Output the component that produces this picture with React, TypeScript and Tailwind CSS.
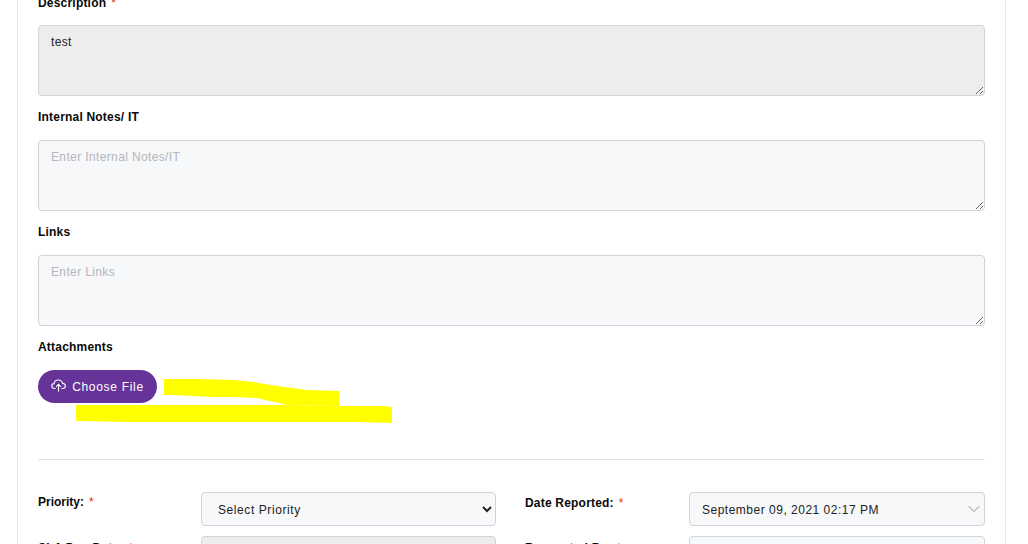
import { ChevronDown } from "lucide-react"

const fieldLabel = "block text-[12px] font-bold leading-[18px] tracking-[0.2px] text-[#0a0a0a]"
const noteBox =
  "block w-full h-[71px] rounded-[4px] border border-[#ced4da] bg-[#f7f8fa] px-3 py-2 text-[12px] leading-[16px] tracking-[0.37px] text-[#222] placeholder:text-[#b4b6ba] outline-none"

const Req = () => <span className="ml-[5px] font-normal text-[#f1292b]">*</span>

const UploadCloud = () => (
  <svg width="15" height="13" viewBox="0 0 15 13" fill="none" stroke="currentColor" strokeWidth="1.1" className="-mt-[3px]">
    <path d="M4.5 9.5H3.5C1.8 9.5 .8 8.4 .8 7C.8 5.7 1.8 4.7 3 4.6C3.4 2.5 5.1 1 7.3 1C9.4 1 11.1 2.4 11.6 4.4C13.2 4.5 14.3 5.6 14.3 7C14.3 8.4 13.2 9.5 11.6 9.5H10.5" />
    <path d="M7.5 12.5V5.5M5 7.8L7.5 5.3L10 7.8" />
  </svg>
)

const Scribble = () => (
  <svg className="absolute left-0 top-0" width="1028" height="544" fill="#ffff00">
    <polygon points="164,379 197,379 233,380 253,382 277,386 307,390 339,391 339,406 287,405 257,398 233,397 212,397 172,395 164,395" />
    <polygon points="76,405 283,405 339,406 383,406 392,407 392,423 357,422 130,422 76,421" />
  </svg>
)

export default function App() {
  return (
    <div
      className="relative h-[544px] overflow-hidden bg-white"
      style={{ fontFamily: '"Liberation Sans", Arial, sans-serif' }}
    >
      <div className="ml-[17px] w-[989px] border-x border-[#e6e6e6] px-5 -mt-[6px]">
        <label className={fieldLabel}>
          Description
          <Req />
        </label>
        <textarea readOnly value="test" className={`${noteBox} mt-[13px] bg-[#ededed]!`} />

        <label className={`${fieldLabel} mt-[12px]`}>Internal Notes/ IT</label>
        <textarea placeholder="Enter Internal Notes/IT" className={`${noteBox} mt-[14px]`} />

        <label className={`${fieldLabel} mt-[12px]`}>Links</label>
        <textarea placeholder="Enter Links" className={`${noteBox} mt-[14px]`} />

        <label className={`${fieldLabel} mt-[12px]`}>Attachments</label>
        <div className="mt-[14px] flex">
          <button className="flex h-[33px] w-[119px] items-center justify-center gap-[6px] rounded-full bg-[#663399] text-[12px] tracking-[0.7px] text-white">
            <UploadCloud />
            Choose File
          </button>
        </div>

        <hr className="mt-[56px] border-t border-[#e3e3e3]" />

        <div className="mt-[32px] grid grid-cols-[458px_1fr] gap-x-[29px] gap-y-[10px]">
          <div className="flex items-start">
            <label className={`${fieldLabel} w-[163px] pt-[1px] tracking-[0px]`}>
              Priority:
              <Req />
            </label>
            <select className="h-[34px] flex-1 rounded-[4px] border border-[#ced4da] bg-[#f7f8fa] px-3 pt-[1px] text-[12px] tracking-[0.58px] text-[#222] outline-none">
              <option>Select Priority</option>
            </select>
          </div>
          <div className="flex items-start">
            <label className={`${fieldLabel} w-[164px] pt-[2px]`}>
              Date Reported:
              <Req />
            </label>
            <div className="flex h-[34px] flex-1 items-center justify-between rounded-[4px] border border-[#ced4da] bg-[#f7f8fa] pl-3 pt-[1px] text-[12px] tracking-[0.5px] text-[#222]">
              September 09, 2021 02:17 PM
              <ChevronDown size={20} strokeWidth={1} className="-mt-[1px] text-[#777]" />
            </div>
          </div>
          <div className="flex items-start">
            <label className={`${fieldLabel} w-[163px] pt-[3px]`}>
              SLA Due Date:
              <Req />
            </label>
            <div className="h-[34px] flex-1 rounded-[4px] border border-[#ced4da] bg-[#ededed]" />
          </div>
          <div className="flex items-start">
            <label className={`${fieldLabel} w-[164px] pt-[3px]`}>
              Requested By:
              <Req />
            </label>
            <div className="h-[34px] flex-1 rounded-[4px] border border-[#ced4da] bg-[#f7f8fa]" />
          </div>
        </div>
      </div>
      <Scribble />
    </div>
  )
}
